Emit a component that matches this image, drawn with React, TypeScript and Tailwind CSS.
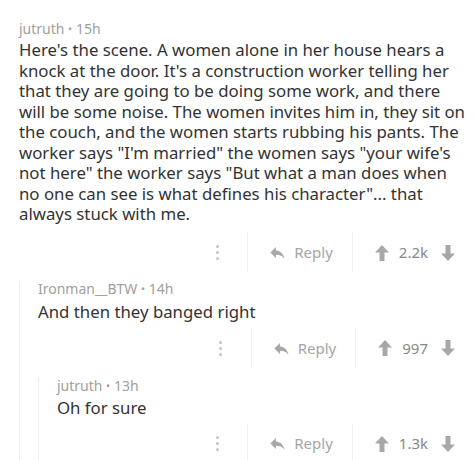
import React from 'react';

function ReplyIcon() {
  return (
    <svg viewBox="0 0 24 24" className="w-[19px] h-[19px]" fill="#a8a8a8">
      <path d="M10 9V5l-7 7 7 7v-4.1c5 0 8.5 1.6 11 5.1-1-5-4-10-11-11z" />
    </svg>
  );
}

function ArrowUp() {
  return (
    <svg viewBox="0 0 14 16" className="w-[14px] h-[16px]" fill="#a8a8a8">
      <path d="M7 0 L14 7.5 H9.5 V16 H4.5 V7.5 H0 Z" />
    </svg>
  );
}

function ArrowDown() {
  return (
    <svg viewBox="0 0 14 16" className="w-[14px] h-[16px]" fill="#a8a8a8">
      <path d="M7 16 L14 8.5 H9.5 V0 H4.5 V8.5 H0 Z" />
    </svg>
  );
}

function Actions({ score }: { score: string }) {
  return (
    <div className="flex items-center justify-end h-[40px] text-[#a5a5a5] text-[15px]">
      <div className="flex flex-col gap-[3px] items-center w-[4px] mr-[28px]">
        <span className="w-[3px] h-[3px] rounded-full bg-[#c4c4c4]" />
        <span className="w-[3px] h-[3px] rounded-full bg-[#c4c4c4]" />
        <span className="w-[3px] h-[3px] rounded-full bg-[#c4c4c4]" />
      </div>
      <div className="w-px h-[40px] bg-[#f0f0f0]" />
      <div className="flex items-center gap-[7px] pl-[20px] pr-[19px]">
        <ReplyIcon />
        <span>Reply</span>
      </div>
      <div className="w-px h-[40px] bg-[#f0f0f0]" />
      <div className="flex items-center pl-[22px]">
        <ArrowUp />
        <span className="ml-[10px] text-[#888]">{score}</span>
        <span className="ml-[13px]">
          <ArrowDown />
        </span>
      </div>
    </div>
  );
}

function Meta({ user, age }: { user: string; age: string }) {
  return (
    <div className="text-[14px] leading-[16px] text-[#a0a0a0]">
      {user} <span className="text-[11px] relative -top-px">•</span> {age}
    </div>
  );
}

const story = [
  "Here's the scene. A women alone in her house hears a",
  "knock at the door. It's a construction worker telling her",
  'that they are going to be doing some work, and there',
  'will be some noise. The women invites him in, they sit on',
  'the couch, and the women starts rubbing his pants. The',
  'worker says "I\'m married" the women says "your wife\'s',
  'not here" the worker says "But what a man does when',
  'no one can see is what defines his character"... that',
  'always stuck with me.',
];

export default function App() {
  return (
    <div className="w-[474px] h-[460px] bg-white overflow-hidden font-['Noto_Sans','Open_Sans',sans-serif]">
      <div className="pl-[19px] pr-[19px] pt-[21px]">
        <Meta user="jutruth" age="15h" />
        <div className="mt-[2px] -mr-[12px] text-[16.8px] text-[#333] whitespace-nowrap">
          {story.map((line) => (
            <div key={line} className="h-[20.5px] leading-[20.5px]">
              {line}
            </div>
          ))}
        </div>
        <div className="mt-[8px]">
          <Actions score="2.2k" />
        </div>
        <div className="mt-[8px] border-l border-[#eeeeee]">
          <div className="pl-[18px]">
            <Meta user="Ironman__BTW" age="14h" />
            <p className="mt-[4px] text-[16.8px] leading-[20.5px] text-[#333]">And then they banged right</p>
            <div className="mt-[6px]">
              <Actions score="997" />
            </div>
            <div className="mt-[10px] border-l border-[#eeeeee]">
              <div className="pl-[18px]">
                <Meta user="jutruth" age="13h" />
                <p className="mt-[3px] text-[16.8px] leading-[20.5px] text-[#333]">Oh for sure</p>
                <div className="mt-[5px]">
                  <Actions score="1.3k" />
                </div>
              </div>
            </div>
          </div>
        </div>
      </div>
    </div>
  );
}
